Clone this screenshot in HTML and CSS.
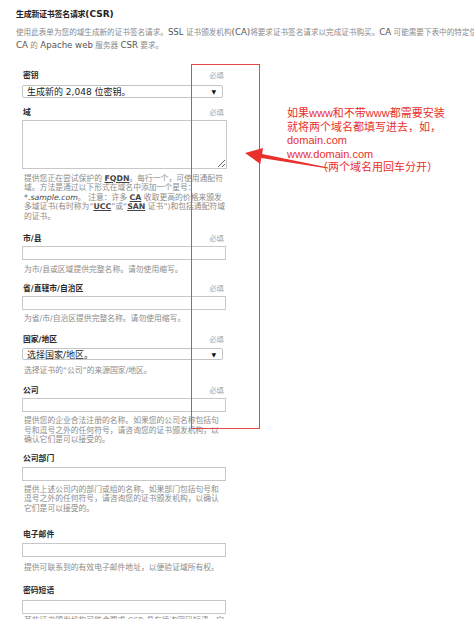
FILE: index.html
```html
<!DOCTYPE html>
<html lang="zh-CN">
<head>
<meta charset="utf-8">
<title>生成新证书签名请求(CSR)</title>
<link rel="stylesheet" href="styles.css">
</head>
<body>
<div class="page">
  <h1 class="title">生成新证书签名请求<span class="en">(CSR)</span></h1>
  <div class="intro">
    <div class="line">使用此表单为您的域生成新的证书签名请求。<span class="en">SSL</span> 证书颁发机构<span class="en">(CA)</span>将要求证书签名请求以完成证书购买。<span class="en">CA</span> 可能需要下表中的特定信息，以及</div>
    <div class="line"><span class="en">CA</span> 的 <span class="en">Apache web</span> 服务器 <span class="en">CSR</span> 要求。</div>
  </div>

  <div class="form">
    <div class="field">
      <div class="lab gap4"><span>密钥</span><span class="req">必填</span></div>
      <div class="select"><span>生成新的 2,048 位密钥。</span><span class="caret">▼</span></div>
    </div>

    <div class="field mt10">
      <div class="lab"><span>域</span><span class="req">必填</span></div>
      <textarea class="ta"></textarea>
      <div class="help">提供您正在尝试保护的 <u>FQDN</u>。每行一个，可使用通配符<br>域。方法是通过以下形式在域名中添加一个星号：<br><i>*.sample.com</i>。 注意：许多 <u>CA</u> 收取更高的价格来颁发<br>多域证书(有时称为“<u>UCC</u>”或“<u>SAN</u> 证书”)和包括通配符域<br>的证书。</div>
    </div>

    <div class="field mt13">
      <div class="lab"><span>市/县</span><span class="req">必填</span></div>
      <input class="inp" type="text">
      <div class="help">为市/县或区域提供完整名称。请勿使用缩写。</div>
    </div>

    <div class="field mt10">
      <div class="lab"><span>省/直辖市/自治区</span><span class="req">必填</span></div>
      <input class="inp" type="text">
      <div class="help tight">为省/市/自治区提供完整名称。请勿使用缩写。</div>
    </div>

    <div class="field mt12">
      <div class="lab gap3"><span>国家/地区</span><span class="req">必填</span></div>
      <div class="select short"><span>选择国家/地区。</span><span class="caret">▼</span></div>
      <div class="help loose">选择证书的“公司”的来源国家/地区。</div>
    </div>

    <div class="field mt10">
      <div class="lab"><span>公司</span><span class="req">必填</span></div>
      <input class="inp" type="text">
      <div class="help">提供您的企业合法注册的名称。如果您的公司名称包括句<br>号和逗号之外的任何符号，请咨询您的证书颁发机构，以<br>确认它们是可以接受的。</div>
    </div>

    <div class="field mt9">
      <div class="lab gap3"><span>公司部门</span></div>
      <input class="inp" type="text">
      <div class="help mid">提供上述公司内的部门或组的名称。如果部门包括句号和<br>逗号之外的任何符号，请咨询您的证书颁发机构，以确认<br>它们是可以接受的。</div>
    </div>

    <div class="field mt16">
      <div class="lab gap3"><span>电子邮件</span></div>
      <input class="inp" type="text">
      <div class="help loose">提供可联系到的有效电子邮件地址，以便验证域所有权。</div>
    </div>

    <div class="field mt14">
      <div class="lab gap4"><span>密码短语</span></div>
      <input class="inp" type="text">
      <div class="help tighter">某些证书颁发机构可能会要求 CSR 具有质询密码短语，它</div>
    </div>
  </div>

  <div class="mark-box"></div>
  <svg class="mark-arrow" width="474" height="619" viewBox="0 0 474 619">
    <polygon points="245,153 263.1,148.1 262.1,154 328.1,167.5 327.9,168.5 261.3,158 260.3,163.9" fill="#e8302c"/>
  </svg>
  <div class="mark-note">如果www和不带www都需要安装<br>就将两个域名都填写进去，如，<br>domain.com<br>www.domain.com<br><span class="indent">（两个域名用回车分开）</span></div>
</div>
</body>
</html>
```

FILE: styles.css
```css
html, body {
  margin: 0;
  padding: 0;
  background: #fff;
}
body {
  width: 474px;
  height: 619px;
  overflow: hidden;
  font-family: "DejaVu Sans", "Noto Sans CJK SC", sans-serif;
  color: #333;
}
.page {
  position: relative;
  width: 474px;
  height: 619px;
  overflow: hidden;
}
.title {
  margin: 0;
  padding: 9px 0 0 16px;
  font-size: 8px;
  line-height: 10px;
  font-weight: bold;
  color: #222;
  letter-spacing: -0.3px;
}
.title .en {
  font-size: 9px;
  letter-spacing: 0;
}
.intro {
  margin: 5.5px 0 0 16px;
  color: #8a8a8a;
  font-size: 7.6px;
  line-height: 12px;
  white-space: nowrap;
}
.intro .en {
  font-size: 8.6px;
  color: #555;
}
.form {
  width: 205px;
  margin: 19.5px 0 0 22px;
}
.field {
  display: flex;
  flex-direction: column;
}
.mt9 { margin-top: 9px; }
.mt10 { margin-top: 10px; }
.mt12 { margin-top: 12px; }
.mt13 { margin-top: 13px; }
.mt14 { margin-top: 14px; }
.mt16 { margin-top: 16.5px; }
.lab {
  display: flex;
  justify-content: space-between;
  align-items: center;
  height: 10px;
  line-height: 10px;
  padding: 0 3px 0 1px;
  margin-bottom: 2px;
  font-size: 7.8px;
  font-weight: bold;
  color: #2a2a2a;
}
.lab.gap3 { margin-bottom: 3px; }
.lab.gap4 { margin-bottom: 4px; }
.req {
  font-weight: normal;
  color: #a0a0a0;
  font-size: 7.4px;
}
.select {
  box-sizing: border-box;
  display: flex;
  justify-content: space-between;
  align-items: center;
  width: 201px;
  height: 13px;
  border: 1px solid #c4c4c4;
  border-radius: 2px;
  padding: 0 6px 0 4px;
  font-size: 9px;
  color: #222;
  background: #fff;
}
.select.short { height: 12px; }
.caret {
  font-size: 6px;
  color: #111;
}
.ta {
  display: block;
  box-sizing: border-box;
  width: 205px;
  height: 49px;
  margin: 0;
  padding: 0;
  border: 1px solid #c8c8c8;
  resize: vertical;
  background: #fff;
}
.inp {
  display: block;
  box-sizing: border-box;
  width: 204px;
  height: 14px;
  margin: 0;
  padding: 0;
  border: 1px solid #c8c8c8;
  background: #fff;
}
.help {
  margin-top: 4.5px;
  padding-left: 2px;
  font-size: 7.8px;
  line-height: 9.5px;
  color: #8c8c8c;
  white-space: nowrap;
}
.help.tight { margin-top: 3.5px; }
.help.tighter { margin-top: 2px; }
.help.mid { margin-top: 4px; }
.help.loose { margin-top: 6px; }
.help u {
  color: #444;
  font-weight: bold;
}
.help i {
  color: #444;
}
.mark-box {
  position: absolute;
  left: 191px;
  top: 64px;
  width: 67px;
  height: 363px;
  border: 1px solid #e5484a;
}
.mark-arrow {
  position: absolute;
  left: 0;
  top: 0;
}
.mark-note {
  position: absolute;
  left: 287px;
  top: 107px;
  font-family: "Liberation Sans", "Noto Sans CJK SC", sans-serif;
  font-size: 11px;
  line-height: 13.5px;
  color: #e8302c;
  white-space: nowrap;
}
.mark-note .indent {
  padding-left: 30px;
}
```
